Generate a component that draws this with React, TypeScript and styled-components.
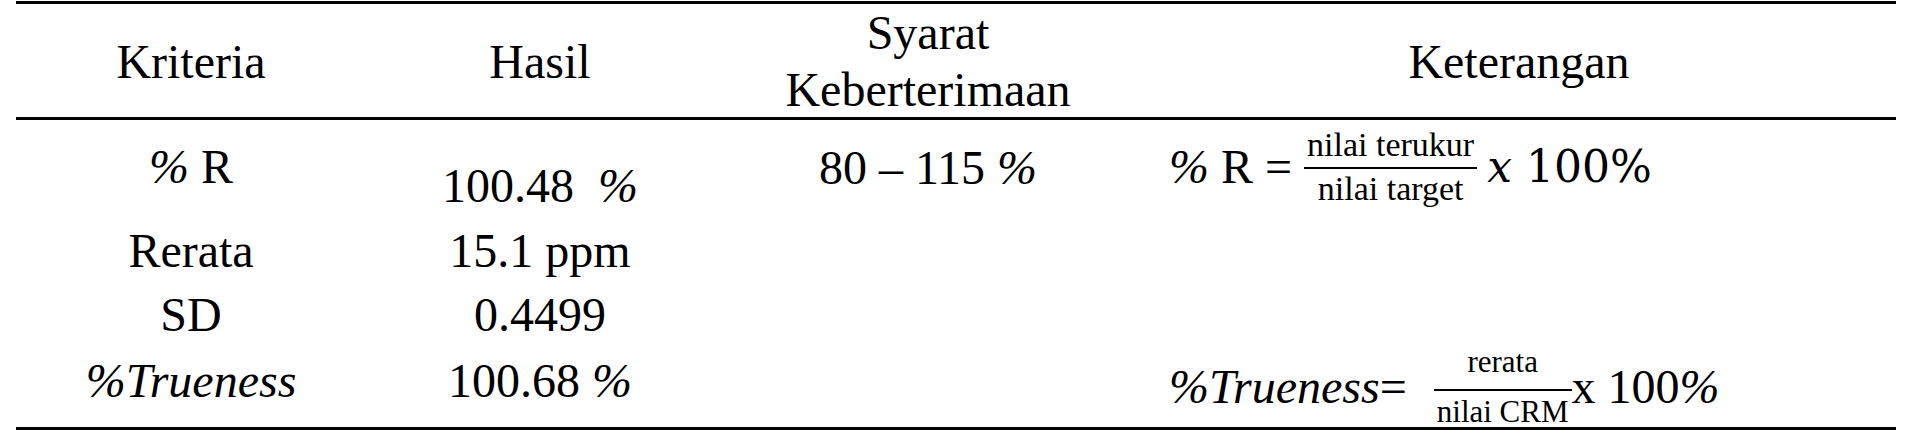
import styled, { createGlobalStyle } from 'styled-components'

const GlobalStyle = createGlobalStyle`
  html, body {
    margin: 0;
    padding: 0;
    background: #fff;
  }
`

const serif = `'Liberation Serif', 'Times New Roman', serif`

const columns = '350px 348px 428px 754px'

const Page = styled.div`
  width: 1923px;
  height: 430px;
  padding: 1px 0 0 16px;
  box-sizing: border-box;
  background: #fff;
  color: #000;
  font-family: ${serif};
`

const Table = styled.div`
  width: 1880px;
  border-top: 3px solid #000;
  border-bottom: 3px solid #000;
`

const HeaderRow = styled.div`
  display: grid;
  grid-template-columns: ${columns};
  height: 113px;
  border-bottom: 3px solid #000;
`

const HeadCell = styled.div`
  display: flex;
  align-items: center;
  justify-content: center;
  text-align: center;
  font-size: 48px;
  line-height: 57px;
`

const BodyRow = styled.div<{ $height: number }>`
  display: grid;
  grid-template-columns: ${columns};
  height: ${(p) => p.$height}px;
`

const Cell = styled.div<{ $top?: number; $formula?: boolean }>`
  margin-top: ${(p) => p.$top ?? 0}px;
  padding-left: ${(p) => (p.$formula ? 27 : 0)}px;
  text-align: ${(p) => (p.$formula ? 'left' : 'center')};
  font-size: 48px;
  line-height: 64px;
  white-space: pre;
`

const Pct = styled.span`
  font-style: italic;
`

const Formula = styled.div`
  display: flex;
  align-items: center;
  font-size: 48px;
  line-height: 1;
  white-space: pre;
`

const Frac = styled.span<{ $gap: number; $size: number }>`
  display: inline-flex;
  flex-direction: column;
  align-items: center;
  margin-left: ${(p) => p.$gap}px;
  font-size: ${(p) => p.$size}px;
  line-height: 1;
`

const Num = styled.span<{ $space: number }>`
  padding: 0 3px ${(p) => p.$space}px;
`

const Bar = styled.span`
  align-self: stretch;
  height: 2px;
  background: #000;
`

const Den = styled.span<{ $space: number }>`
  padding: ${(p) => p.$space}px 3px 0;
`

const MathTail = styled.span`
  margin-left: 10px;
  font-family: 'DejaVu Serif', 'Liberation Serif', serif;
  font-size: 44px;
`

const Tail = styled.span``

export default function App() {
  return (
    <>
      <GlobalStyle />
      <Page>
        <Table>
          <HeaderRow>
            <HeadCell>Kriteria</HeadCell>
            <HeadCell>Hasil</HeadCell>
            <HeadCell>
              Syarat
              <br />
              Keberterimaan
            </HeadCell>
            <HeadCell>Keterangan</HeadCell>
          </HeaderRow>

          <BodyRow $height={99}>
            <Cell $top={15}>
              <Pct>%</Pct> R
            </Cell>
            <Cell $top={34}>
              100.48  <Pct>%</Pct>
            </Cell>
            <Cell $top={16}>
              80 – 115 <Pct>%</Pct>
            </Cell>
            <Cell $top={8} $formula>
              <Formula>
                <span>
                  <Pct>%</Pct> R =
                </span>
                <Frac $gap={12} $size={34}>
                  <Num $space={5}>nilai terukur</Num>
                  <Bar />
                  <Den $space={3}>nilai target</Den>
                </Frac>
                <MathTail>
                  <i>x</i> 100%
                </MathTail>
              </Formula>
            </Cell>
          </BodyRow>

          <BodyRow $height={64}>
            <Cell>Rerata</Cell>
            <Cell>15.1 ppm</Cell>
            <Cell />
            <Cell />
          </BodyRow>

          <BodyRow $height={64}>
            <Cell>SD</Cell>
            <Cell>0.4499</Cell>
            <Cell />
            <Cell />
          </BodyRow>

          <BodyRow $height={80}>
            <Cell $top={2}>
              <Pct>%Trueness</Pct>
            </Cell>
            <Cell $top={2}>
              100.68 <Pct>%</Pct>
            </Cell>
            <Cell />
            <Cell $top={-1} $formula>
              <Formula>
                <span>
                  <Pct>%Trueness</Pct>=
                </span>
                <Frac $gap={27} $size={31}>
                  <Num $space={12}>rerata</Num>
                  <Bar />
                  <Den $space={5}>nilai CRM</Den>
                </Frac>
                <Tail>
                  x 100<Pct>%</Pct>
                </Tail>
              </Formula>
            </Cell>
          </BodyRow>
        </Table>
      </Page>
    </>
  )
}
